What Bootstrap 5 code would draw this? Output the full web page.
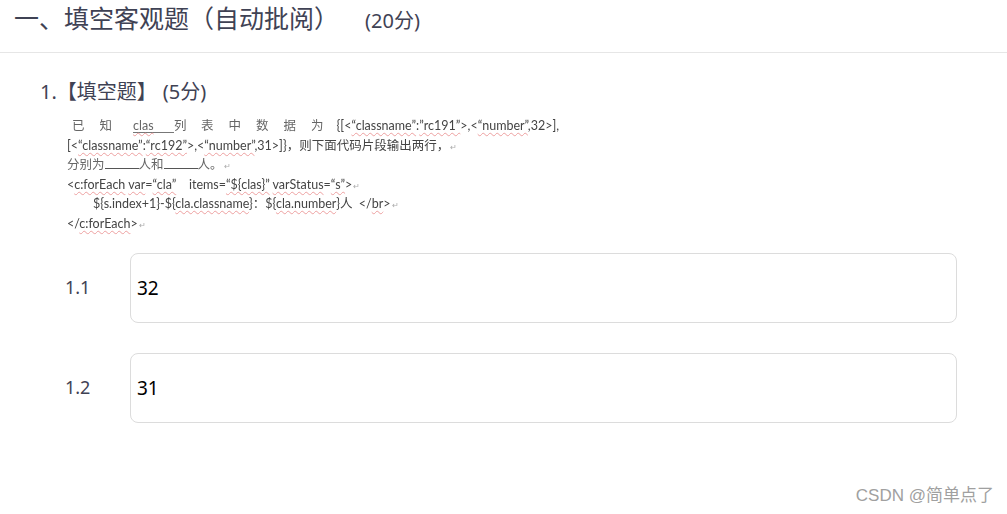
<!DOCTYPE html>
<html lang="zh">
<head>
<meta charset="utf-8">
<title>填空客观题</title>
<link href="https://cdn.jsdelivr.net/npm/bootstrap@5.3.0/dist/css/bootstrap.min.css" rel="stylesheet">
<style>
html,body{height:514px;overflow:hidden}
body{background:#fff;font-family:"Noto Sans","Noto Sans CJK SC",sans-serif;color:#3f4254}
.sec-head{height:53px;padding:0 14px;border-bottom:1px solid #e6e6e6;font-size:25px;line-height:36px;white-space:nowrap}
.sec-score{font-size:20px;margin-left:26px}
.q-wrap{padding:25px 0 0 40px}
.q-title{font-size:20px;line-height:28px;white-space:nowrap}
.q-score{margin-left:6px}
.doc-pic{margin:10px 0 0 27px;width:520px;font-family:Lato,"Noto Sans CJK SC",sans-serif;font-size:12.5px;line-height:19.5px;color:#666;white-space:nowrap;filter:blur(.35px)}
.doc-line{height:19.5px}
.doc-dark{color:#444}
.doc-first{margin-left:5px}
.doc-cols{column-gap:15px}
.doc-group{margin-left:6px;width:53px}
.doc-under{display:inline-block;width:41px;border-bottom:1px solid #777;line-height:13px}
.doc-blank{display:inline-block;width:34px;border-bottom:1px solid #555;height:13px}
.doc-data{margin-left:13px}
.doc-indent{padding-left:26px}
.wv{text-decoration:underline wavy #eda0a0 1px;text-underline-offset:2px}
.ret{font-size:8px;line-height:1;color:#aaa;margin-left:1px}
.ans-list{margin-top:20px}
.ans-row{height:70px;margin-bottom:30px;padding:0 50px 0 40px}
.ans-no{width:90px;padding:0 0 2px 25px;font-size:18px}
.ans-box{flex:1;height:70px;border:1px solid #dcdcdc;border-radius:8px;padding:0 6px;font-size:19px;color:#000;background:#fff}
.mark-wm{position:absolute;right:13px;top:485px;font-family:"Liberation Sans","Noto Sans CJK SC",sans-serif;font-size:17px;line-height:22px;color:#a0a0a0}
</style>
</head>
<body class="position-relative">
<div class="sec-head">一、填空客观题（自动批阅）<span class="sec-score">(20分)</span></div>
<div class="q-wrap">
  <div class="q-title">1.【填空题】<span class="q-score">(5分)</span></div>
  <div class="doc-pic">
    <div class="doc-line d-flex align-items-baseline doc-first">
      <div class="d-flex align-items-baseline doc-cols"><span>已</span><span>知</span><span class="doc-group"><span class="doc-under"><span class="wv">clas</span></span>列</span><span>表</span><span>中</span><span>数</span><span>据</span><span>为</span></div>
      <span class="doc-dark doc-data">{[&lt;<span class="wv">“classname”</span>:<span class="wv">”rc191”</span>&gt;,&lt;<span class="wv">“number”</span>,32&gt;],</span>
    </div>
    <div class="doc-line doc-dark">[&lt;<span class="wv">“classname”</span>:<span class="wv">“rc192”</span>&gt;,&lt;<span class="wv">“number”</span>,31&gt;]}，<span>则下面代码片段输出两行，</span><span class="ret">↵</span></div>
    <div class="doc-line">分别为<span class="doc-blank"></span>人和<span class="doc-blank"></span>人。<span class="ret">↵</span></div>
    <div class="doc-line doc-dark">&lt;<span class="wv">c:forEach</span> <span class="wv">var</span>=<span class="wv">“cla”</span> &nbsp; &nbsp;items=<span class="wv">“${clas}”</span> <span class="wv">varStatus</span>=<span class="wv">“s”</span>&gt;<span class="ret">↵</span></div>
    <div class="doc-line doc-dark doc-indent">${s.index+1}-${<span class="wv">cla.classname</span>}：${<span class="wv">cla.number</span>}人 &nbsp;&lt;/<span class="wv">br</span>&gt;<span class="ret">↵</span></div>
    <div class="doc-line doc-dark">&lt;/<span class="wv">c:forEach</span>&gt;<span class="ret">↵</span></div>
  </div>
</div>
<div class="ans-list">
  <div class="ans-row d-flex align-items-center"><div class="ans-no">1.1</div><div class="ans-box d-flex align-items-center">32</div></div>
  <div class="ans-row d-flex align-items-center"><div class="ans-no">1.2</div><div class="ans-box d-flex align-items-center">31</div></div>
</div>
<div class="mark-wm">CSDN @简单点了</div>
<script src="https://cdn.jsdelivr.net/npm/bootstrap@5.3.0/dist/js/bootstrap.bundle.min.js"></script>
</body>
</html>
